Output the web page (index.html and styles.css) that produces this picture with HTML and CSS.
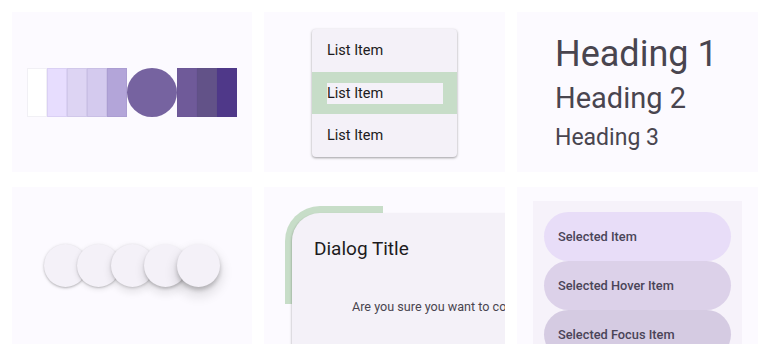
FILE: index.html
```html
<!DOCTYPE html>
<html lang="en">
<head>
	<meta charset="UTF-8">
	<title>Theme preview</title>
	<link rel="stylesheet" href="styles.css">
</head>
<body>
<div id="wrap">
	<div class="card">
		<div class="palette">
			<span class="swatch t100"></span>
			<span class="swatch t95"></span>
			<span class="swatch t90"></span>
			<span class="swatch t80"></span>
			<span class="swatch t70"></span>
			<span class="dot"></span>
			<span class="swatch t30"></span>
			<span class="swatch t20"></span>
			<span class="swatch t10"></span>
		</div>
	</div>

	<div class="card">
		<ul class="menu">
			<li>List Item</li>
			<li class="focused"><span>List Item</span></li>
			<li>List Item</li>
		</ul>
	</div>

	<div class="card type">
		<h1>Heading 1</h1>
		<h2>Heading 2</h2>
		<h3>Heading 3</h3>
	</div>

	<div class="card">
		<div class="levels">
			<span class="lvl lvl1"></span>
			<span class="lvl lvl2"></span>
			<span class="lvl lvl3"></span>
			<span class="lvl lvl4"></span>
			<span class="lvl lvl5"></span>
		</div>
	</div>

	<div class="card dialog-card">
		<div class="dialog">
			<div class="dialog-title">Dialog Title</div>
			<p class="dialog-body">Are you sure you want to continue?</p>
		</div>
	</div>

	<div class="card nav-card">
		<ul class="nav">
			<li class="sel">Selected Item</li>
			<li class="sel hover">Selected Hover Item</li>
			<li class="sel focus">Selected Focus Item</li>
		</ul>
	</div>
</div>
</body>
</html>
```

FILE: styles.css
```css
body,ul,p,h1,h2,h3{
	margin:0;
	padding:0;
}
body{
	background:#fff;
	font-family:Roboto,"Noto Sans",sans-serif;
	color:#1d1b20;
}
#wrap{
	display:grid;
	grid-template-columns:240px 241px 241px;
	grid-template-rows:160px 157px;
	column-gap:12px;
	row-gap:15px;
	padding:12px;
}
.card{
	background:#fcfaff;
	overflow:hidden;
	display:flex;
	align-items:center;
	justify-content:center;
}

/* palette */
.palette{
	display:flex;
	align-items:center;
}
.swatch{
	width:20px;
	height:49px;
	box-sizing:border-box;
	border:1px solid rgba(80,60,130,.08);
}
.t100{background:#fff;}
.t95{background:#e7ddfe;}
.t90{background:#ddd4f3;}
.t80{background:#d4caee;}
.t70{background:#b3a5d9;}
.t30{background:#6f5a99;}
.t20{background:#625288;}
.t10{background:#4f3889;}
.dot{
	width:50px;
	height:49px;
	border-radius:50%;
	background:#7663a0;
}

/* menu */
.menu{
	list-style:none;
	width:145px;
	margin-top:2px;
	background:#f4f1f8;
	border-radius:4px;
	box-shadow:0 1px 3px rgba(0,0,0,.28),0 1px 2px rgba(0,0,0,.12);
	font-size:14.5px;
	color:#1d1b20;
}
.menu li{
	height:43px;
	line-height:44px;
	padding:0 14px 0 15px;
}
.menu li.focused{
	height:42px;
	background:#c7ddc8;
	display:flex;
	align-items:center;
}
.menu li.focused span{
	flex:1;
	height:21px;
	line-height:22px;
	background:#f4f1f8;
}

/* type */
.type{
	flex-direction:column;
	align-items:flex-start;
	justify-content:flex-start;
	padding:21px 0 0 38px;
	color:#49454f;
}
.type h1{
	font-size:36px;
	font-weight:400;
	line-height:42px;
}
.type h2{
	font-size:29px;
	font-weight:400;
	line-height:47px;
}
.type h3{
	font-size:23px;
	font-weight:400;
	line-height:32px;
}

/* elevation */
.levels{
	display:flex;
	padding-left:10px;
}
.lvl{
	width:43px;
	height:43px;
	border-radius:50%;
	background:#f4f1f8;
	margin-left:-9.75px;
}
.lvl1{box-shadow:0 1px 2px rgba(0,0,0,.2),0 1px 3px 1px rgba(0,0,0,.08);}
.lvl2{box-shadow:0 1px 2px rgba(0,0,0,.2),0 2px 5px 1px rgba(0,0,0,.08);}
.lvl3{box-shadow:0 1px 3px rgba(0,0,0,.2),0 4px 7px 2px rgba(0,0,0,.08);}
.lvl4{box-shadow:0 2px 3px rgba(0,0,0,.2),0 5px 9px 2px rgba(0,0,0,.09);}
.lvl5{box-shadow:0 3px 4px rgba(0,0,0,.22),0 7px 11px 3px rgba(0,0,0,.1);}

/* dialog */
.dialog-card{
	isolation:isolate;
	align-items:flex-start;
	justify-content:flex-start;
	padding:26px 0 0 28px;
}
.dialog{
	position:relative;
	flex:none;
	width:280px;
	height:200px;
	background:#f4f1f8;
	border-radius:28px 28px 0 0;
	box-shadow:-1px 1px 2px rgba(0,0,0,.16);
	padding:23px 0 0 22px;
	box-sizing:border-box;
}
.dialog:before{
	content:'';
	position:absolute;
	left:-7px;
	top:-7px;
	width:98px;
	height:98px;
	background:#c7ddc8;
	border-top-left-radius:35px;
	z-index:-1;
}
.dialog-title{
	font-size:19px;
	line-height:26px;
	color:#1d1b20;
}
.dialog-body{
	margin:36px 0 0 38px;
	font-size:12.6px;
	line-height:18px;
	color:#49454f;
	white-space:nowrap;
}

/* navigation */
.nav-card{
	align-items:flex-start;
	justify-content:flex-start;
	padding:14px 0 0 16px;
}
.nav{
	list-style:none;
	width:209px;
	height:200px;
	box-sizing:border-box;
	padding:11px;
	background:#f6f2fa;
}
.nav li{
	height:49px;
	line-height:49px;
	border-radius:25px;
	padding-left:14px;
	font-size:12.8px;
	font-weight:500;
	color:#4a4458;
}
.nav .sel{background:#e8ddf8;}
.nav .hover{background:#dcd1e9;}
.nav .focus{background:#d5cbe2;}
```
